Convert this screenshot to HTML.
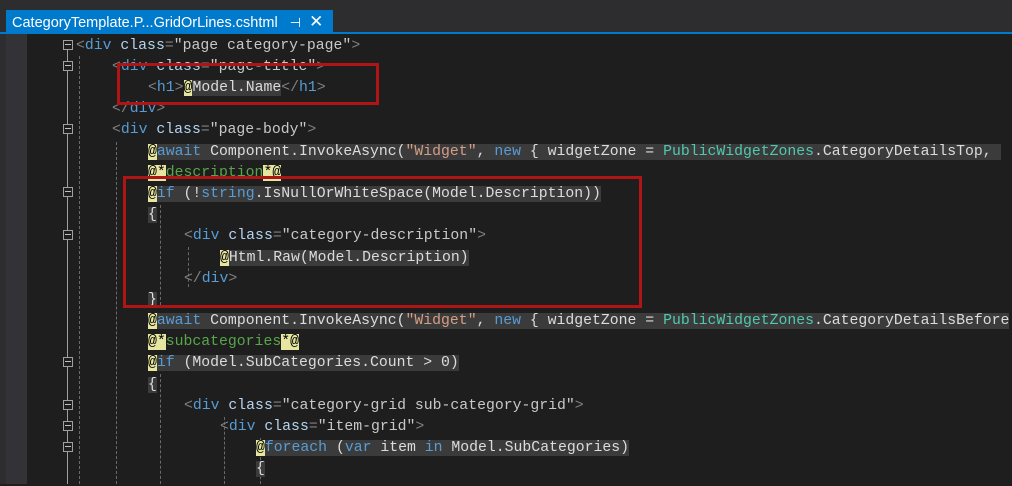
<!DOCTYPE html>
<html><head><style>
*{margin:0;padding:0;box-sizing:border-box}
body{width:1012px;height:484px;overflow:hidden;background:#1e1e1e;position:relative;font-family:"Liberation Mono",monospace;font-size:14.8px;color:#dcdcdc}
.top{position:absolute;left:0;top:0;width:1012px;height:34px;background:#2d2d30}
.bl{position:absolute;left:0;top:32px;width:1012px;height:2px;background:#007acc}
.tab{position:absolute;left:6px;top:10px;width:327px;height:24px;background:#007acc;color:#fff;font-family:"Liberation Sans",sans-serif;font-size:14.5px;line-height:23px;padding-left:6px;white-space:nowrap}
.lm{position:absolute;left:0;top:34px;width:6px;height:450px;background:#2d2d30}
.lm2{position:absolute;left:6px;top:34px;width:21px;height:450px;background:#333337}
.ln{position:absolute;left:0;height:21px;line-height:21px;white-space:pre}
.g{color:#808080}.t{color:#569cd6}.a{color:#b4d4f0}.v{color:#c8c8c8}
.k{color:#569cd6}.ty{color:#4ec9b0}.s{color:#d69d85}.c{color:#57a64a}
.at{background:#e6e6a0;color:#000}
.r{background:#3b3b3b}
.fb{position:absolute;left:63px;width:10px;height:10px;border:1px solid #a0a0a0;background:#1e1e1e}
.fb:after{content:"";position:absolute;left:1px;top:3px;width:6px;height:1px;background:#c0c0c0}
.vl{position:absolute;left:67px;width:1px;background:#a0a0a0}
.dg{position:absolute;width:0;border-left:1px dashed #6a6a6a}
.red{position:absolute;border:3px solid #b01515}
.c2{position:absolute;left:0;top:2px;width:1012px;height:484px}
</style></head><body>
<div class="top"></div><div class="bl"></div>
<div class="tab">CategoryTemplate.P...GridOrLines.cshtml &nbsp;&nbsp;<span style="font-size:13px">⊣</span>&nbsp;&nbsp;<span style="font-size:17px">✕</span></div>
<div class="lm"></div><div class="lm2"></div>
<div class="vl" style="top:49px;height:435px"></div>
<div class="fb" style="top:40px"></div>
<div class="fb" style="top:61px"></div>
<div class="fb" style="top:124px"></div>
<div class="fb" style="top:187px"></div>
<div class="fb" style="top:230px"></div>
<div class="fb" style="top:357px"></div>
<div class="fb" style="top:400px"></div>
<div class="fb" style="top:421px"></div>
<div class="fb" style="top:442px"></div>
<div class="dg" style="left:79px;top:56px;height:428px"></div>
<div class="dg" style="left:116px;top:142px;height:342px"></div>
<div class="dg" style="left:160px;top:205px;height:100px"></div>
<div class="dg" style="left:160px;top:374px;height:110px"></div>
<div class="dg" style="left:188px;top:247px;height:40px"></div>
<div class="dg" style="left:224px;top:417px;height:67px"></div>
<div class="dg" style="left:260px;top:438px;height:46px"></div>
<div class="c2">
<div class="ln" style="top:34px;left:76px"><span class="g">&lt;</span><span class="t">div</span> <span class="a">class</span><span class="g">=</span><span class="v">"page category-page"</span><span class="g">&gt;</span></div>
<div class="ln" style="top:55px;left:112px"><span class="g">&lt;</span><span class="t">div</span> <span class="a">class</span><span class="g">=</span><span class="v">"page-title"</span><span class="g">&gt;</span></div>
<div class="ln" style="top:76px;left:148px"><span class="g">&lt;</span><span class="t">h1</span><span class="g">&gt;</span><span class="at">@</span><span class="r">Model.Name</span><span class="g">&lt;/</span><span class="t">h1</span><span class="g">&gt;</span></div>
<div class="ln" style="top:97px;left:112px"><span class="g">&lt;/</span><span class="t">div</span><span class="g">&gt;</span></div>
<div class="ln" style="top:118px;left:112px"><span class="g">&lt;</span><span class="t">div</span> <span class="a">class</span><span class="g">=</span><span class="v">"page-body"</span><span class="g">&gt;</span></div>
<div class="ln" style="top:140px;left:148px"><span class="at">@</span><span class="r"><span class="k">await</span> Component.InvokeAsync(<span class="s">"Widget"</span>, <span class="k">new</span> { widgetZone = <span class="ty">PublicWidgetZones</span>.CategoryDetailsTop, </span></div>
<div class="ln" style="top:161px;left:148px"><span class="at">@*</span><span class="c">description</span><span class="at">*@</span></div>
<div class="ln" style="top:182px;left:148px"><span class="at">@</span><span class="r"><span class="k">if</span> (!<span class="k">string</span>.IsNullOrWhiteSpace(Model.Description))</span></div>
<div class="ln" style="top:203px;left:148px"><span class="r">{</span></div>
<div class="ln" style="top:224px;left:184px"><span class="g">&lt;</span><span class="t">div</span> <span class="a">class</span><span class="g">=</span><span class="v">"category-description"</span><span class="g">&gt;</span></div>
<div class="ln" style="top:246px;left:220px"><span class="at">@</span><span class="r">Html.Raw(Model.Description)</span></div>
<div class="ln" style="top:267px;left:184px"><span class="g">&lt;/</span><span class="t">div</span><span class="g">&gt;</span></div>
<div class="ln" style="top:288px;left:148px"><span class="r">}</span></div>
<div class="ln" style="top:309px;left:148px"><span class="at">@</span><span class="r"><span class="k">await</span> Component.InvokeAsync(<span class="s">"Widget"</span>, <span class="k">new</span> { widgetZone = <span class="ty">PublicWidgetZones</span>.CategoryDetailsBefore</span></div>
<div class="ln" style="top:330px;left:148px"><span class="at">@*</span><span class="c">subcategories</span><span class="at">*@</span></div>
<div class="ln" style="top:351px;left:148px"><span class="at">@</span><span class="r"><span class="k">if</span> (Model.SubCategories.Count &gt; 0)</span></div>
<div class="ln" style="top:373px;left:148px"><span class="r">{</span></div>
<div class="ln" style="top:394px;left:184px"><span class="g">&lt;</span><span class="t">div</span> <span class="a">class</span><span class="g">=</span><span class="v">"category-grid sub-category-grid"</span><span class="g">&gt;</span></div>
<div class="ln" style="top:415px;left:220px"><span class="g">&lt;</span><span class="t">div</span> <span class="a">class</span><span class="g">=</span><span class="v">"item-grid"</span><span class="g">&gt;</span></div>
<div class="ln" style="top:436px;left:256px"><span class="at">@</span><span class="r"><span class="k">foreach</span> (<span class="k">var</span> item <span class="k">in</span> Model.SubCategories)</span></div>
<div class="ln" style="top:457px;left:256px"><span class="r">{</span></div>
</div>
<div class="red" style="left:117px;top:63px;width:262px;height:42px"></div>
<div class="red" style="left:123px;top:176px;width:519px;height:132px"></div>
</body></html>
